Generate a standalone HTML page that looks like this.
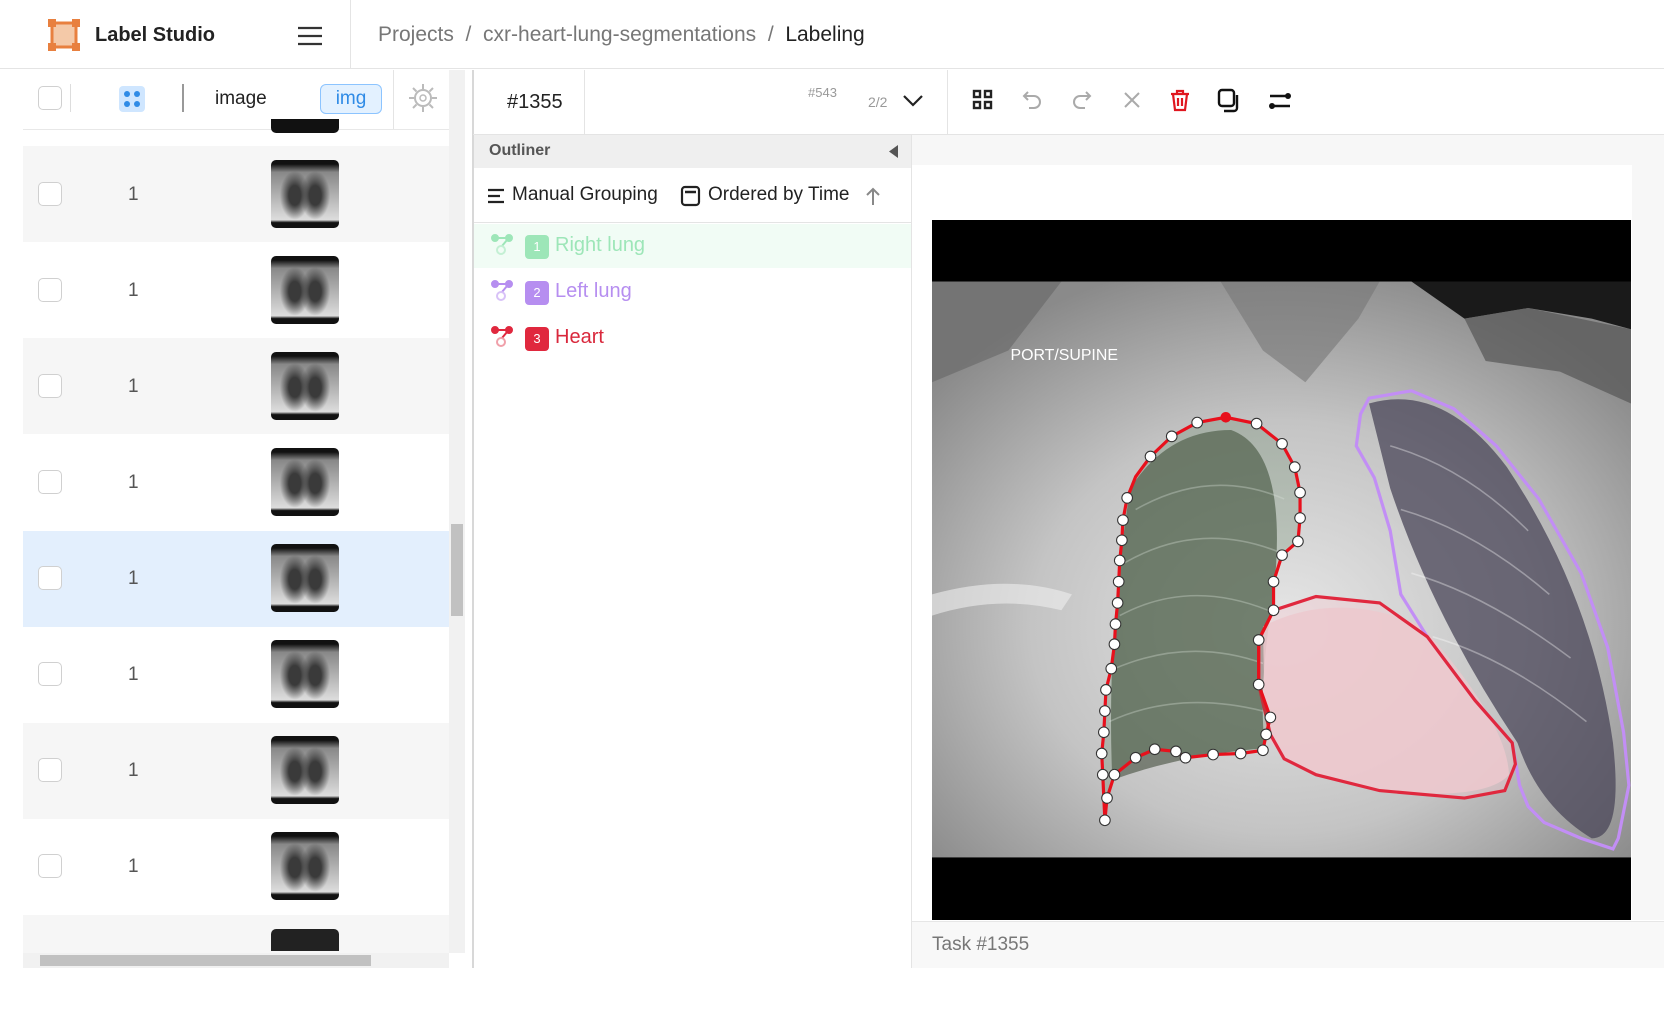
<!DOCTYPE html>
<html><head><meta charset="utf-8"><style>
*{box-sizing:border-box;margin:0;padding:0}
body{width:1664px;height:1030px;background:#fff;font-family:"Liberation Sans",sans-serif;position:relative;overflow:hidden;color:#222}
.a{position:absolute}
.cb{position:absolute;left:38px;width:24px;height:24px;border:1.5px solid #d0d0d0;border-radius:5px;background:#fff}
.num{position:absolute;left:128px;font-size:19px;color:#555}
.th{position:absolute;left:271px;width:68px;height:68px;border-radius:5px;background:radial-gradient(ellipse 22% 36% at 35% 52%,#3a3a3a,#3a3a3a 40%,transparent 100%),radial-gradient(ellipse 22% 36% at 65% 52%,#3a3a3a,#3a3a3a 40%,transparent 100%),linear-gradient(#111 0 6%,#888 18%,#bbb 60%,#ddd 88%,#111 92%)}
.ic{position:absolute;top:88px}
</style></head><body>
<div class="a" style="left:0;top:0;width:1664px;height:69px;border-bottom:1px solid #e4e4e4"></div>
<svg class="a" style="left:47px;top:18px" width="34" height="34" viewBox="0 0 34 34"><rect x="5" y="5" width="24" height="24" fill="#f4c9a8" stroke="#e8803f" stroke-width="3"/><rect x="1" y="1" width="8" height="8" fill="#e8803f"/><rect x="25" y="1" width="8" height="8" fill="#e8803f"/><rect x="1" y="25" width="8" height="8" fill="#e8803f"/><rect x="25" y="25" width="8" height="8" fill="#e8803f"/></svg>
<div class="a" style="left:95px;top:24px;font-size:20px;font-weight:bold">Label Studio</div>
<svg class="a" style="left:297px;top:25px" width="26" height="22"><path d="M1 3H25M1 11H25M1 19H25" stroke="#333" stroke-width="2.2"/></svg>
<div class="a" style="left:350px;top:0;width:1px;height:69px;background:#e4e4e4"></div>
<div class="a" style="left:378px;top:23px;font-size:21px;color:#777">Projects &nbsp;/&nbsp; cxr-heart-lung-segmentations &nbsp;/&nbsp; <span style="color:#222">Labeling</span></div>
<div class="a" style="left:23px;top:70px;width:449px;height:898px;background:#fff"></div>
<div class="cb" style="top:86px"></div>
<div class="a" style="left:70px;top:84px;width:1px;height:28px;background:#ddd"></div>
<div class="a" style="left:119px;top:86px;width:26px;height:26px;border-radius:4px;background:#cfe6ff"></div>
<svg class="a" style="left:122px;top:89px" width="20" height="20"><g fill="#2f8be6"><circle cx="5" cy="5" r="3"/><circle cx="15" cy="5" r="3"/><circle cx="5" cy="15" r="3"/><circle cx="15" cy="15" r="3"/></g></svg>
<div class="a" style="left:182px;top:84px;width:1.5px;height:28px;background:#999"></div>
<div class="a" style="left:215px;top:88px;font-size:19px">image</div>
<div class="a" style="left:320px;top:84px;width:62px;height:30px;border:1px solid #8cc4ff;background:#e3f1ff;border-radius:6px;color:#2f8be6;font-size:19px;text-align:center;line-height:28px">img</div>
<div class="a" style="left:393px;top:70px;width:1px;height:59px;background:#e4e4e4"></div>
<svg class="a" style="left:408px;top:83px" width="30" height="30" viewBox="0 0 30 30"><circle cx="15" cy="15" r="8" fill="none" stroke="#bbb" stroke-width="2"/><circle cx="15" cy="15" r="3" fill="none" stroke="#bbb" stroke-width="1.5"/><path d="M15 1V6M15 24V29M1 15H6M24 15H29M5 5L8.5 8.5M21.5 21.5L25 25M25 5L21.5 8.5M8.5 21.5L5 25" stroke="#bbb" stroke-width="2"/></svg>
<div class="a" style="left:23px;top:129px;width:426px;height:1px;background:#e8e8e8"></div>
<div class="a" style="left:271px;top:119px;width:68px;height:14px;background:#111;border-radius:0 0 5px 5px"></div>
<div class="a" style="left:23px;top:146px;width:426px;height:96px;background:#f6f6f6"></div>
<div class="a" style="left:23px;top:338px;width:426px;height:96px;background:#f6f6f6"></div>
<div class="a" style="left:23px;top:531px;width:426px;height:96px;background:#e3effd"></div>
<div class="a" style="left:23px;top:723px;width:426px;height:96px;background:#f6f6f6"></div>
<div class="a" style="left:23px;top:915px;width:426px;height:38px;background:#f6f6f6"></div>
<div class="cb" style="top:182px"></div><div class="num" style="top:184px">1</div><div class="th" style="top:160px"></div>
<div class="cb" style="top:278px"></div><div class="num" style="top:280px">1</div><div class="th" style="top:256px"></div>
<div class="cb" style="top:374px"></div><div class="num" style="top:376px">1</div><div class="th" style="top:352px"></div>
<div class="cb" style="top:470px"></div><div class="num" style="top:472px">1</div><div class="th" style="top:448px"></div>
<div class="cb" style="top:566px"></div><div class="num" style="top:568px">1</div><div class="th" style="top:544px"></div>
<div class="cb" style="top:662px"></div><div class="num" style="top:664px">1</div><div class="th" style="top:640px"></div>
<div class="cb" style="top:758px"></div><div class="num" style="top:760px">1</div><div class="th" style="top:736px"></div>
<div class="cb" style="top:854px"></div><div class="num" style="top:856px">1</div><div class="th" style="top:832px"></div>
<div class="a" style="left:271px;top:929px;width:68px;height:22px;background:#222;border-radius:5px 5px 0 0"></div>
<div class="a" style="left:449px;top:70px;width:16px;height:883px;background:#f1f1f1"></div>
<div class="a" style="left:451px;top:524px;width:12px;height:92px;background:#c1c1c1"></div>
<div class="a" style="left:23px;top:953px;width:426px;height:15px;background:#f1f1f1"></div>
<div class="a" style="left:40px;top:955px;width:331px;height:11px;background:#c1c1c1"></div>
<div class="a" style="left:472px;top:70px;width:2px;height:898px;background:#d8d8d8"></div>
<div class="a" style="left:507px;top:91px;font-size:20px">#1355</div>
<div class="a" style="left:584px;top:70px;width:1px;height:64px;background:#e4e4e4"></div>
<div class="a" style="left:808px;top:85px;font-size:13px;color:#999">#543</div>
<div class="a" style="left:868px;top:94px;font-size:14px;color:#999">2/2</div>
<svg class="a" style="left:902px;top:94px" width="22" height="14"><path d="M2 2L11 11L20 2" fill="none" stroke="#222" stroke-width="2.2"/></svg>
<div class="a" style="left:947px;top:70px;width:1px;height:64px;background:#e4e4e4"></div>
<div class="a" style="left:473px;top:134px;width:1191px;height:1px;background:#e4e4e4"></div>
<svg class="ic" style="left:971px" width="24" height="24"><g fill="none" stroke="#222" stroke-width="2.4"><rect x="3" y="3" width="6" height="6"/><rect x="14" y="3" width="6" height="6"/><rect x="3" y="14" width="6" height="6"/><rect x="14" y="14" width="6" height="6"/></g></svg>
<svg class="ic" style="left:1021px" width="24" height="24"><path d="M7 4L3 8L7 12M3 8H13A6 6 0 0 1 13 20H8" fill="none" stroke="#aaa" stroke-width="2"/></svg>
<svg class="ic" style="left:1069px" width="24" height="24"><path d="M17 4L21 8L17 12M21 8H11A6 6 0 0 0 11 20H16" fill="none" stroke="#aaa" stroke-width="2"/></svg>
<svg class="ic" style="left:1120px" width="24" height="24"><path d="M5 5L19 19M19 5L5 19" stroke="#aaa" stroke-width="2"/></svg>
<svg class="ic" style="left:1168px" width="24" height="26"><path d="M3 6H21M9 6V3H15V6M5 6L7 22H17L19 6M10 10V18M14 10V18" fill="none" stroke="#e0161f" stroke-width="2.2"/></svg>
<svg class="ic" style="left:1217px" width="26" height="26"><rect x="2" y="2" width="15" height="16" rx="3" fill="none" stroke="#111" stroke-width="2.4"/><path d="M20 7V20A3 3 0 0 1 17 23H7" fill="none" stroke="#111" stroke-width="2.4"/></svg>
<svg class="ic" style="left:1267px" width="26" height="26"><path d="M3 8H21M5 18H23" stroke="#111" stroke-width="2.6"/><circle cx="21" cy="8" r="3" fill="#111"/><circle cx="5" cy="18" r="3" fill="#111"/></svg>
<div class="a" style="left:474px;top:135px;width:438px;height:33px;background:#efefef"></div>
<div class="a" style="left:489px;top:142px;font-size:16px;font-weight:bold;color:#555">Outliner</div>
<svg class="a" style="left:889px;top:145px" width="10" height="13"><path d="M9 0V13L0 6.5Z" fill="#555"/></svg>
<svg class="a" style="left:487px;top:188px" width="18" height="16"><path d="M1 2H17M1 8H13M1 14H17" stroke="#222" stroke-width="2.2"/></svg>
<div class="a" style="left:512px;top:184px;font-size:19px">Manual Grouping</div>
<svg class="a" style="left:680px;top:185px" width="22" height="22"><rect x="2" y="2" width="17" height="18" rx="3" fill="none" stroke="#222" stroke-width="2.2"/><path d="M5 7H16" stroke="#222" stroke-width="2.5"/></svg>
<div class="a" style="left:708px;top:184px;font-size:19px">Ordered by Time</div>
<svg class="a" style="left:865px;top:186px" width="16" height="20"><path d="M8 19V3M2 9L8 3L14 9" fill="none" stroke="#888" stroke-width="2"/></svg>
<div class="a" style="left:474px;top:222px;width:438px;height:1px;background:#e4e4e4"></div>
<div class="a" style="left:474px;top:224px;width:438px;height:44px;background:#f1fcf5"></div>
<svg class="a" style="left:489px;top:233px" width="26" height="24"><g fill="none" stroke-width="2"><circle cx="6" cy="5" r="3" fill="#9de6b8" stroke="#9de6b8"/><circle cx="20" cy="5" r="3" fill="#9de6b8" stroke="#9de6b8"/><path d="M6 5H20M18 7L13 13" stroke="#9de6b8"/><circle cx="12" cy="17" r="4" stroke="#c4f0d4"/></g></svg>
<div class="a" style="left:525px;top:235px;width:24px;height:24px;border-radius:4px;background:#9de6b8;color:#fff;font-size:13px;text-align:center;line-height:24px">1</div>
<div class="a" style="left:555px;top:234px;font-size:20px;color:#9de6b8">Right lung</div>
<svg class="a" style="left:489px;top:279px" width="26" height="24"><g fill="none" stroke-width="2"><circle cx="6" cy="5" r="3" fill="#b68ef0" stroke="#b68ef0"/><circle cx="20" cy="5" r="3" fill="#b68ef0" stroke="#b68ef0"/><path d="M6 5H20M18 7L13 13" stroke="#b68ef0"/><circle cx="12" cy="17" r="4" stroke="#d8c2f7"/></g></svg>
<div class="a" style="left:525px;top:281px;width:24px;height:24px;border-radius:4px;background:#b68ef0;color:#fff;font-size:13px;text-align:center;line-height:24px">2</div>
<div class="a" style="left:555px;top:280px;font-size:20px;color:#b68ef0">Left lung</div>
<svg class="a" style="left:489px;top:325px" width="26" height="24"><g fill="none" stroke-width="2"><circle cx="6" cy="5" r="3" fill="#e0283e" stroke="#e0283e"/><circle cx="20" cy="5" r="3" fill="#e0283e" stroke="#e0283e"/><path d="M6 5H20M18 7L13 13" stroke="#e0283e"/><circle cx="12" cy="17" r="4" stroke="#f0a0aa"/></g></svg>
<div class="a" style="left:525px;top:327px;width:24px;height:24px;border-radius:4px;background:#e0283e;color:#fff;font-size:13px;text-align:center;line-height:24px">3</div>
<div class="a" style="left:555px;top:326px;font-size:20px;color:#d9283c">Heart</div>
<div class="a" style="left:911px;top:135px;width:1px;height:833px;background:#e4e4e4"></div>
<div class="a" style="left:912px;top:135px;width:752px;height:30px;background:#f7f7f7"></div>
<div class="a" style="left:1632px;top:165px;width:32px;height:755px;background:#f7f7f7"></div>
<div class="a" style="left:912px;top:921px;width:752px;height:47px;background:#f8f8f8;border-top:1px solid #e6e6e6"></div>
<div class="a" style="left:932px;top:934px;font-size:19px;color:#777">Task #1355</div>
<svg class="a" style="left:932px;top:220px" width="699" height="700" viewBox="878 207 659 660" preserveAspectRatio="none">
<defs>
<radialGradient id="g1" cx="0.5" cy="0.6" r="0.65"><stop offset="0" stop-color="#e6e6e6"/><stop offset="0.55" stop-color="#c4c4c4"/><stop offset="1" stop-color="#8a8a8a"/></radialGradient>
</defs>
<rect x="878" y="207" width="659" height="660" fill="#000"/>
<rect x="878" y="265" width="659" height="543" fill="url(#g1)"/>
<path d="M1330 265L1537 265L1537 310L1500 300L1440 290L1380 300Z" fill="#1a1a1a"/>
<path d="M1380 300L1440 290L1537 310L1537 380L1470 350L1400 340Z" fill="#555" opacity="0.7"/>
<path d="M1150 265L1300 265L1280 300L1230 360L1190 330Z" fill="#777" opacity="0.6"/>
<path d="M878 265L1000 265L950 330L878 360Z" fill="#666" opacity="0.6"/>
<path d="M878 560Q950 540 1010 560L1000 575Q940 560 878 580Z" fill="#eee" opacity="0.6"/>
<path d="M1290 380Q1360 360 1420 440Q1500 560 1520 700Q1530 790 1500 790Q1450 760 1430 700Q1350 580 1310 460Z" fill="#4a4658" opacity="0.75"/>
<path d="M1065 460Q1100 405 1160 405Q1215 425 1200 560Q1185 650 1192 705Q1110 712 1048 735Q1042 600 1065 460Z" fill="#5d6658" opacity="0.75"/>
<path d="M1190 590Q1260 555 1340 590Q1420 680 1422 730Q1400 755 1300 745Q1210 730 1192 690Z" fill="#e8c9cd" opacity="0.85"/>
<g stroke="#fff" stroke-width="1.5" fill="none" opacity="0.35"><path d="M1070 480Q1140 440 1210 470M1060 530Q1130 490 1205 520M1055 580Q1120 545 1195 575M1050 630Q1120 600 1190 625M1045 680Q1110 650 1190 670"/><path d="M1310 420Q1380 440 1440 500M1320 480Q1390 500 1460 560M1330 540Q1400 560 1480 620M1350 600Q1420 620 1495 680"/></g>
<text x="952" y="339" font-family="Liberation Sans,sans-serif" font-size="15" fill="#fff">PORT/SUPINE</text>
<polygon points="1290,375 1330,368 1370,385 1410,420 1450,470 1490,540 1515,610 1530,690 1535,740 1525,790 1520,800 1490,790 1455,775 1440,760 1432,740 1425,700 1390,660 1345,600 1320,560 1310,500 1295,450 1278,420 1282,390" fill="none" stroke="#c28ef5" stroke-width="3"/>
<polygon points="1186,603 1200,575 1240,562 1300,568 1345,600 1390,660 1425,700 1428,720 1418,745 1380,752 1300,745 1240,730 1210,715 1197,692 1186,645" fill="#f4c8d0" fill-opacity="0.4" stroke="#e0283e" stroke-width="3"/>
<polygon points="1155,393 1184,399 1208,418 1220,440 1225,464 1225,488 1223,510 1208,523 1200,548 1200,575 1186,603 1186,645 1197,676 1193,692 1190,707 1169,710 1143,711 1117,714 1108,708 1088,706 1070,714 1050,730 1043,752 1041,773 1040,752 1039,730 1038,710 1040,690 1041,670 1042,650 1047,630 1050,607 1051,588 1053,568 1054,548 1055,528 1057,509 1058,490 1062,469 1070,449 1084,430 1104,411 1128,398" fill="#3c6b3c" fill-opacity="0.2" stroke="#e8101c" stroke-width="3"/>
<g fill="#fff" stroke="#333" stroke-width="1"><circle cx="1184" cy="399" r="5"/><circle cx="1208" cy="418" r="5"/><circle cx="1220" cy="440" r="5"/><circle cx="1225" cy="464" r="5"/><circle cx="1225" cy="488" r="5"/><circle cx="1223" cy="510" r="5"/><circle cx="1208" cy="523" r="5"/><circle cx="1200" cy="548" r="5"/><circle cx="1200" cy="575" r="5"/><circle cx="1186" cy="603" r="5"/><circle cx="1186" cy="645" r="5"/><circle cx="1197" cy="676" r="5"/><circle cx="1193" cy="692" r="5"/><circle cx="1190" cy="707" r="5"/><circle cx="1169" cy="710" r="5"/><circle cx="1143" cy="711" r="5"/><circle cx="1117" cy="714" r="5"/><circle cx="1108" cy="708" r="5"/><circle cx="1088" cy="706" r="5"/><circle cx="1070" cy="714" r="5"/><circle cx="1050" cy="730" r="5"/><circle cx="1043" cy="752" r="5"/><circle cx="1041" cy="773" r="5"/><circle cx="1039" cy="730" r="5"/><circle cx="1038" cy="710" r="5"/><circle cx="1040" cy="690" r="5"/><circle cx="1041" cy="670" r="5"/><circle cx="1042" cy="650" r="5"/><circle cx="1047" cy="630" r="5"/><circle cx="1050" cy="607" r="5"/><circle cx="1051" cy="588" r="5"/><circle cx="1053" cy="568" r="5"/><circle cx="1054" cy="548" r="5"/><circle cx="1055" cy="528" r="5"/><circle cx="1057" cy="509" r="5"/><circle cx="1058" cy="490" r="5"/><circle cx="1062" cy="469" r="5"/><circle cx="1084" cy="430" r="5"/><circle cx="1104" cy="411" r="5"/><circle cx="1128" cy="398" r="5"/></g>
<circle cx="1155" cy="393" r="5" fill="#e8101c"/>
</svg>
</body></html>
